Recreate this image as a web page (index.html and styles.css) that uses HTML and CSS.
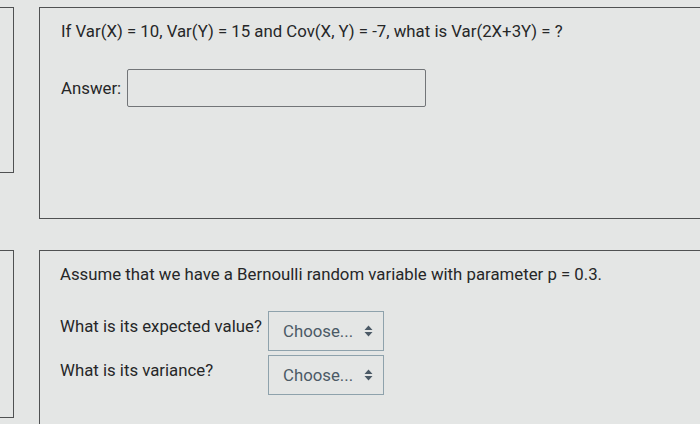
FILE: index.html
```html
<!DOCTYPE html>
<html lang="en">
<head>
    <meta charset="UTF-8">
    <meta name="viewport" content="width=device-width, initial-scale=1.0">
    <title>Quiz</title>
    <link rel="stylesheet" href="styles.css">
</head>
<body>
    <div class="page">
        <div class="que first">
            <div class="info"></div>
            <div class="content">
                <p class="qtext">If Var(X) = 10, Var(Y) = 15 and Cov(X, Y) = -7, what is Var(2X+3Y) = ?</p>
                <div class="answer">
                    <label for="ans1">Answer:</label>
                    <input type="text" id="ans1" class="answer-input">
                </div>
            </div>
        </div>

        <div class="que second">
            <div class="info"></div>
            <div class="content">
                <p class="qtext">Assume that we have a Bernoulli random variable with parameter p = 0.3.</p>
                <div class="match">
                    <div class="match-label">What is its expected value?</div>
                    <div class="select">Choose...
                        <svg class="arrows" width="9" height="12" viewBox="0 0 9 12"><path d="M4.5 0.5 L8.5 5 H0.5 Z M4.5 11.5 L8.5 7 H0.5 Z" fill="#4b5a66"/></svg>
                    </div>
                    <div class="match-label">What is its variance?</div>
                    <div class="select">Choose...
                        <svg class="arrows" width="9" height="12" viewBox="0 0 9 12"><path d="M4.5 0.5 L8.5 5 H0.5 Z M4.5 11.5 L8.5 7 H0.5 Z" fill="#4b5a66"/></svg>
                    </div>
                </div>
            </div>
        </div>
    </div>
</body>
</html>
```

FILE: styles.css
```css
body {
    margin: 0;
    height: 424px;
    background-color: #e4e6e5;
    font-family: Roboto, "Liberation Sans", sans-serif;
    font-size: 16.8px;
    color: #262728;
    overflow: hidden;
}
.page {
    padding-top: 7px;
}
.que {
    display: flex;
    gap: 25px;
}
.que.second {
    margin-top: 31px;
}
.info {
    margin-left: -20px;
    width: 32px;
    height: 164px;
    border: 1px solid #4f5152;
}
.second .info {
    height: 166px;
}
.content {
    flex: 1;
    margin-right: -12px;
    border: 1px solid #4f5152;
    padding: 13px 21px 0;
}
.first .content {
    height: 197px;
}
.second .content {
    height: 160px;
    border-bottom: none;
    padding-left: 20px;
}
.qtext {
    margin: 0;
    line-height: 20px;
}
.answer {
    display: flex;
    align-items: center;
    gap: 6px;
    margin-top: 28px;
}
.answer-input {
    width: 299px;
    height: 38px;
    box-sizing: border-box;
    border: 1px solid #727578;
    border-radius: 2px;
    background-color: transparent;
    margin: 0;
}
.match {
    display: grid;
    grid-template-columns: 208px 116px;
    row-gap: 4px;
    margin-top: 27px;
}
.match-label {
    padding-top: 5px;
    line-height: 20px;
}
.select {
    box-sizing: border-box;
    height: 40px;
    border: 1px solid #8ea2ac;
    padding: 0 0 0 14px;
    display: flex;
    align-items: center;
    color: #4b5a66;
}
.arrows {
    margin-left: 11px;
}
```
